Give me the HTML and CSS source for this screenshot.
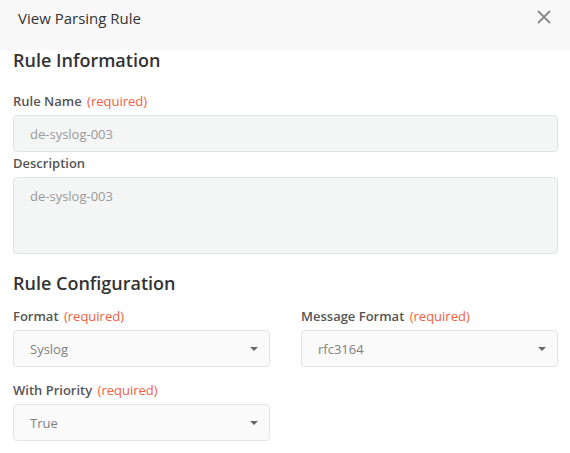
FILE: index.html
```html
<!DOCTYPE html>
<html lang="en">
<head>
<meta charset="utf-8">
<title>View Parsing Rule</title>
<link rel="stylesheet" href="styles.css">
</head>
<body>
<div class="modal">
  <header class="modal-header">
    <h1 class="modal-title">View Parsing Rule</h1>
    <button class="close" aria-label="Close">
      <svg width="14" height="14" viewBox="0 0 14 14"><path d="M1 1L13 13M13 1L1 13" stroke="#8a8a8a" stroke-width="1.8" fill="none"/></svg>
    </button>
  </header>
  <div class="modal-body">
    <h2 class="section-title first">Rule Information</h2>
    <div class="field">
      <label class="label">Rule Name <span class="req">(required)</span></label>
      <div class="input">de-syslog-003</div>
    </div>
    <div class="field">
      <label class="label">Description</label>
      <div class="input textarea">de-syslog-003</div>
    </div>
    <h2 class="section-title second">Rule Configuration</h2>
    <div class="grid">
      <div class="field sel-field">
        <label class="label">Format <span class="req">(required)</span></label>
        <div class="select"><span>Syslog</span><span class="caret"></span></div>
      </div>
      <div class="field sel-field">
        <label class="label">Message Format <span class="req">(required)</span></label>
        <div class="select"><span>rfc3164</span><span class="caret"></span></div>
      </div>
      <div class="field sel-field">
        <label class="label">With Priority <span class="req">(required)</span></label>
        <div class="select"><span>True</span><span class="caret"></span></div>
      </div>
    </div>
  </div>
</div>
</body>
</html>
```
FILE: styles.css
```css
* { box-sizing: border-box; }
html, body { margin: 0; padding: 0; background: #fff; }
body { font-family: "Open Sans", "Liberation Sans", sans-serif; color: #333; }
.modal { width: 570px; }
.modal-header {
  height: 50px;
  background: #f8f8f8;
  display: flex;
  align-items: flex-start;
  justify-content: space-between;
  padding: 0 19px 0 18px;
}
.modal-title {
  margin: 0;
  padding-top: 7px;
  font-size: 15px;
  font-weight: 400;
  line-height: 22px;
  color: #333;
}
.close {
  margin-top: 10px;
  border: 0;
  background: transparent;
  padding: 0;
  width: 14px;
  height: 14px;
  display: flex;
}
.modal-body { padding: 0 12px 0 13px; }
.section-title {
  margin: 0;
  font-size: 18px;
  font-weight: 600;
  line-height: 20px;
  color: #333;
}
.section-title.first { margin-bottom: 22px; }
.section-title.second { margin-top: 19px; margin-bottom: 14px; }
.field { display: flex; flex-direction: column; }
.field + .field { margin-top: 2px; }
.label {
  font-size: 13px;
  font-weight: 600;
  line-height: 18px;
  color: #555;
  margin-bottom: 5px;
}
.req { font-weight: 400; color: #f2603e; margin-left: 2px; }
.input {
  height: 37px;
  border: 1px solid #e2e4e4;
  border-radius: 4px;
  background: #f4f5f5;
  padding: 8px 16px;
  font-size: 13px;
  line-height: 20px;
  color: #9a9a9a;
}
.input.textarea { height: 77px; }
.grid {
  display: grid;
  grid-template-columns: 1fr 1fr;
  column-gap: 31px;
  row-gap: 14px;
}
.grid .field + .field { margin-top: 0; }
.select {
  height: 37px;
  border: 1px solid #e4e4e4;
  border-radius: 4px;
  background: #fafafa;
  padding: 8px 11px 8px 16px;
  font-size: 13px;
  line-height: 20px;
  color: #808080;
  display: flex;
  align-items: center;
  justify-content: space-between;
}
.caret {
  width: 0;
  height: 0;
  border-left: 4px solid transparent;
  border-right: 4px solid transparent;
  border-top: 4px solid #666;
}
```
